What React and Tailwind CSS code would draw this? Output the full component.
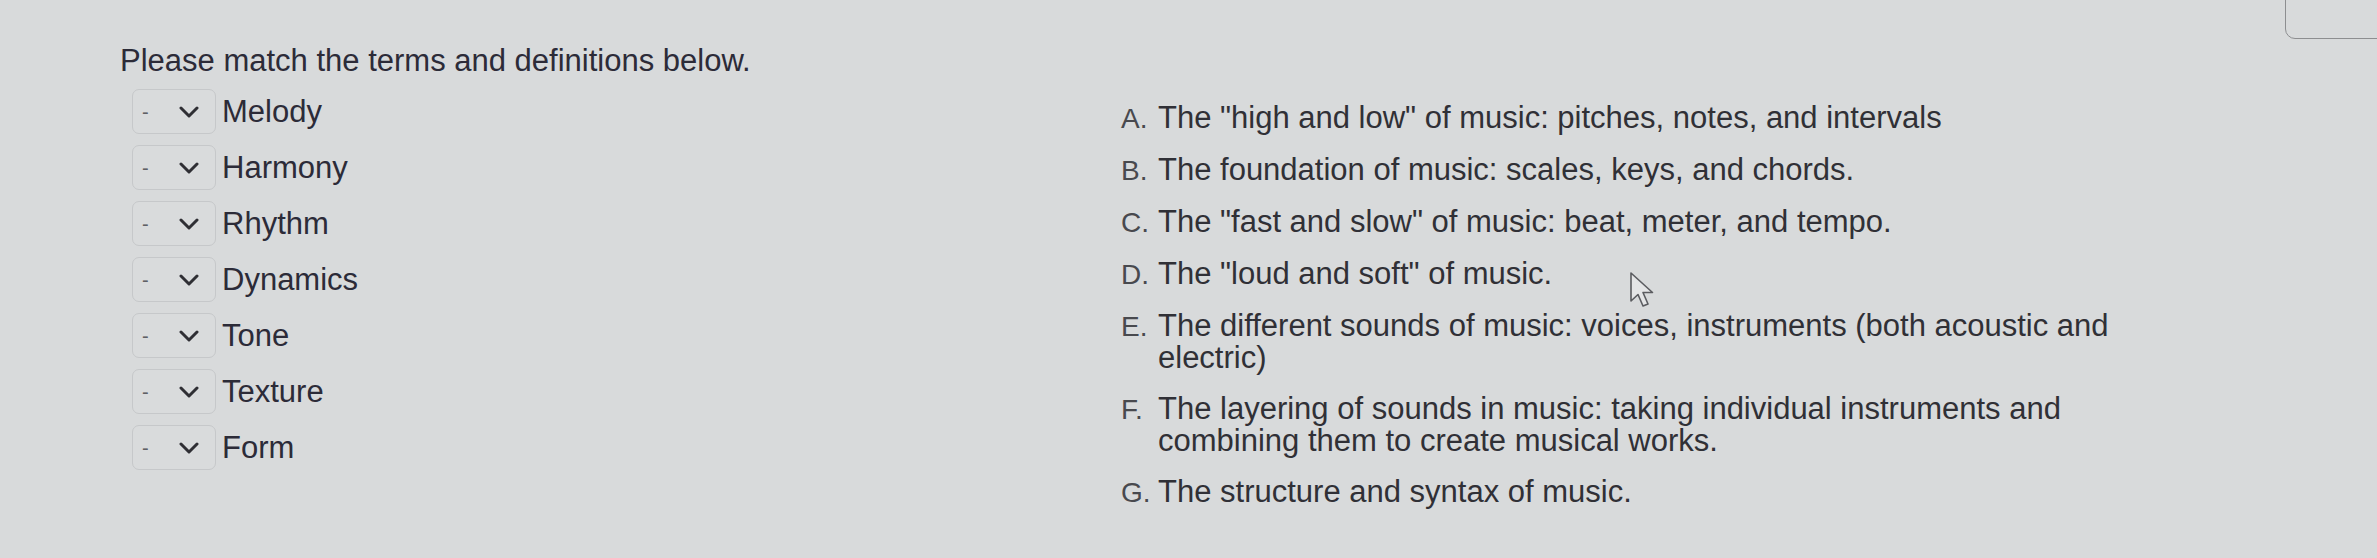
import React from 'react';

const terms = ['Melody', 'Harmony', 'Rhythm', 'Dynamics', 'Tone', 'Texture', 'Form'];

const definitions = [
  ['A', 'The "high and low" of music: pitches, notes, and intervals'],
  ['B', 'The foundation of music: scales, keys, and chords.'],
  ['C', 'The "fast and slow" of music: beat, meter, and tempo.'],
  ['D', 'The "loud and soft" of music.'],
  ['E', 'The different sounds of music: voices, instruments (both acoustic and electric)'],
  ['F', 'The layering of sounds in music: taking individual instruments and combining them to create musical works.'],
  ['G', 'The structure and syntax of music.'],
];

// Collapsed select box showing the "-" placeholder and a chevron
function MatchSelect() {
  return (
    <div className="flex h-[45px] w-[84px] shrink-0 items-center rounded-[7px] border border-[#c6c8ca] bg-[#d9dbdc] pl-[9px]">
      <span className="text-[20px] leading-none text-[#5f6064]">-</span>
      <svg className="ml-[30px]" width="20" height="12" viewBox="0 0 20 12" fill="none">
        <path d="M2 2 L10 10 L18 2" stroke="#2f2f34" strokeWidth="3" strokeLinecap="round" strokeLinejoin="round" />
      </svg>
    </div>
  );
}

function Pointer() {
  return (
    <svg width="28" height="38" viewBox="0 0 28 38" fill="none">
      <path
        d="M2 2 L2 30 L9 23.5 L14 35 L19 33 L14 21.5 L23.5 21.5 Z"
        fill="#e4e5e6"
        stroke="#5b5c60"
        strokeWidth="1.6"
        strokeLinejoin="round"
      />
    </svg>
  );
}

export default function App() {
  return (
    <div
      className="relative h-[558px] w-[2377px] overflow-hidden bg-[#d8dadb] text-[#2c2b38]"
      style={{ fontFamily: '"Liberation Sans", Arial, sans-serif' }}
    >
      {/* partially visible toolbar button in the corner */}
      <div className="absolute right-[-30px] top-[-12px] h-[51px] w-[122px] rounded-[10px] border-[1.5px] border-[#8d8e90]" />

      <div className="flex items-start pl-[120px] pt-[43px]">
        <div className="w-[1001px] shrink-0">
          <div className="text-[31px] leading-[36px]">Please match the terms and definitions below.</div>
          <div className="mt-[10px] flex flex-col gap-[11px] pl-[12px]">
            {terms.map((t) => (
              <div key={t} className="flex items-center gap-[6px]">
                <MatchSelect />
                <span className="text-[31px] leading-[36px]">{t}</span>
              </div>
            ))}
          </div>
        </div>

        <div className="mt-[59px] flex flex-col gap-[19px]">
          {definitions.map(([letter, text]) => (
            <div key={letter} className="flex items-baseline">
              <span className="w-[37px] shrink-0 text-[28px] leading-[32px] text-[#48494e]">{letter}.</span>
              <span className="w-[960px] text-[31px] leading-[32px] text-[#303036]">{text}</span>
            </div>
          ))}
        </div>
      </div>

      <div className="absolute left-[1629px] top-[271px]">
        <Pointer />
      </div>
    </div>
  );
}
